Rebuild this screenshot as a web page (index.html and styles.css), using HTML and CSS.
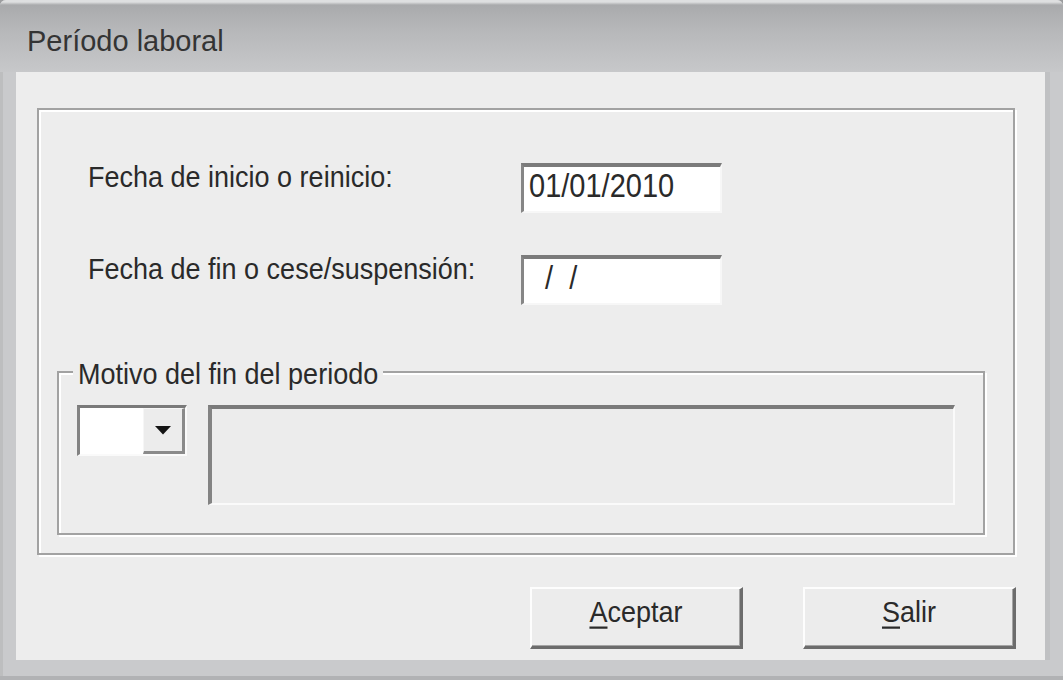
FILE: index.html
```html
<!DOCTYPE html>
<html lang="es">
<head>
<meta charset="utf-8">
<title>Período laboral</title>
<link rel="stylesheet" href="styles.css">
</head>
<body>
<div class="window">
  <div class="titlebar"><span class="title">Período laboral</span></div>
  <div class="client">
    <div class="group">
      <div class="row">
        <span class="label"><span class="tall">Fecha de inicio o reinicio:</span></span>
        <div class="edit"><span class="tall">01/01/2010</span></div>
      </div>
      <div class="row row2">
        <span class="label"><span class="tall">Fecha de fin o cese/suspensión:</span></span>
        <div class="edit"><span class="tall">  /  /</span></div>
      </div>
      <div class="subgroup">
        <div class="legend"><span class="tall">Motivo del fin del periodo</span></div>
        <div class="subrow">
          <div class="combo">
            <div class="combo-field"></div>
            <div class="combo-btn">
              <svg width="16" height="9" viewBox="0 0 16 9"><polygon points="0,0 16,0 8,8.5" fill="#141414"/></svg>
            </div>
          </div>
          <div class="desc"></div>
        </div>
      </div>
    </div>
    <div class="buttons">
      <button class="btn" type="button"><span class="tall"><u>A</u>ceptar</span></button>
      <button class="btn" type="button"><span class="tall"><u>S</u>alir</span></button>
    </div>
  </div>
</div>
</body>
</html>
```

FILE: styles.css
```css
html, body {
  margin: 0;
  padding: 0;
}

body {
  background: #9c9d9f;
  font-family: "Liberation Sans", Arial, sans-serif;
  color: #2a2a2a;
}

.window {
  width: 1063px;
  height: 680px;
  display: flex;
  flex-direction: column;
  background: #c9cacc;
  border-radius: 6px 6px 0 0;
  overflow: hidden;
  box-shadow: inset 0 -4px 0 #b1b2b4, inset 3px 0 0 #bdbebf;
}

.titlebar {
  flex: none;
  height: 72px;
  box-sizing: border-box;
  padding: 24px 0 0 27px;
  background: linear-gradient(#dedfe0 0, #dedfe0 2px, #a9aaac 5px, #b6b7b9 40%, #c7c8ca 100%);
}

.title {
  font-size: 29px;
  line-height: 34px;
  color: #343434;
}

.client {
  flex: 1;
  margin: 0 18px 20px 16px;
  background: #ededed;
  padding: 36px 30px 0 21px;
  display: flex;
  flex-direction: column;
  box-shadow: 5px 0 0 #c0c1c3;
}

.tall {
  display: inline-block;
  transform: scaleY(1.12);
}

.group {
  border: 2px solid #a2a2a2;
  box-shadow: inset 2px 2px 0 #ffffff, 2px 2px 0 #ffffff;
  padding: 50px 28px 18px 18px;
}

.row {
  display: flex;
  align-items: flex-start;
  margin-left: 31px;
}

.row2 {
  margin-top: 39px;
}

.label {
  width: 433px;
  flex: none;
  padding-top: 2px;
  font-size: 27px;
  line-height: 31px;
  color: #2a2a2a;
}

.edit {
  margin-top: 3px;
  width: 201px;
  height: 50px;
  box-sizing: border-box;
  background: #ffffff;
  border-style: solid;
  border-width: 4px 2px 2px 3px;
  border-color: #7b7b7b #f7f7f7 #f7f7f7 #868686;
  padding-left: 5px;
  font-size: 29px;
  line-height: 38px;
  white-space: pre;
  color: #2a2a2a;
}

.subgroup {
  margin-top: 66px;
  border: 2px solid #a2a2a2;
  box-shadow: inset 2px 2px 0 #ffffff, 2px 2px 0 #ffffff;
  padding: 0 28px 28px 18px;
}

.legend {
  width: max-content;
  margin: -14px 0 0 -4px;
  padding: 0 5px;
  background: #ededed;
  font-size: 27px;
  line-height: 31px;
  color: #2a2a2a;
}

.subrow {
  display: flex;
  align-items: flex-start;
  gap: 21px;
  margin-top: 15px;
}

.combo {
  width: 110px;
  height: 51px;
  box-sizing: border-box;
  display: flex;
  background: #ffffff;
  border-style: solid;
  border-width: 3px 2px 2px 3px;
  border-color: #7a7a7a #fafafa #fafafa #828282;
}

.combo-field {
  flex: 1;
  background: #ffffff;
}

.combo-btn {
  width: 42px;
  box-sizing: border-box;
  display: flex;
  align-items: center;
  justify-content: center;
  background: #ececec;
  border-style: solid;
  border-width: 1px 3px 3px 1px;
  border-color: #f6f6f6 #8a8a8a #8a8a8a #f6f6f6;
}

.desc {
  width: 747px;
  height: 100px;
  box-sizing: border-box;
  background: #ececec;
  border-style: solid;
  border-width: 4px 2px 2px 4px;
  border-color: #7a7a7a #fafafa #fafafa #838383;
}

.buttons {
  display: flex;
  justify-content: flex-end;
  gap: 60px;
  margin-top: 32px;
  margin-right: -1px;
}

.btn {
  width: 213px;
  height: 62px;
  box-sizing: border-box;
  padding: 0 0 10px 0;
  background: #ececec;
  border-style: solid;
  border-width: 2px 3px 3px 2px;
  border-color: #fdfdfd #6c6c6c #6c6c6c #fdfdfd;
  box-shadow: inset -1px -1px 0 #a4a4a4;
  font-family: "Liberation Sans", Arial, sans-serif;
  font-size: 27px;
  line-height: 31px;
  color: #2a2a2a;
}

.btn u {
  text-decoration-thickness: 2px;
  text-underline-offset: 4px;
}
```
